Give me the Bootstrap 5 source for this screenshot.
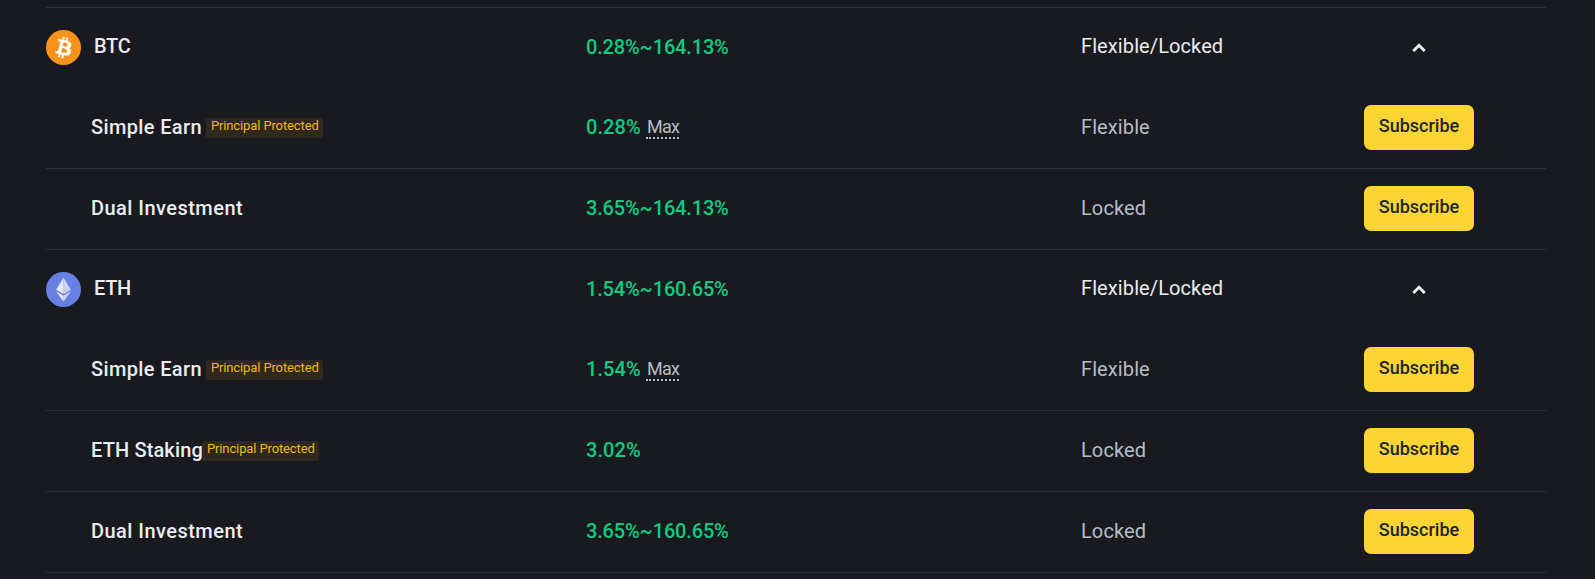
<!DOCTYPE html>
<html lang="en" data-bs-theme="dark">
<head>
<meta charset="utf-8">
<title>Earn products</title>
<link href="https://cdn.jsdelivr.net/npm/bootstrap@5.3.0/dist/css/bootstrap.min.css" rel="stylesheet">
<style>
body { background: #181a20; color: #eaecef; font: 400 20px/30px Roboto, sans-serif; overflow: hidden; }
.earn-list { margin: 7px 49px 0 46px; border-top: 1px solid #2b3139; }
.asset-row { height: 80px; padding-bottom: 4px; }
.product-row { height: 81px; border-bottom: 1px solid #2b3139; padding-bottom: 2px; }
.col-name { width: 36%; }
.col-apr { width: 33%; }
.col-term { width: 211px; letter-spacing: .1px; color: #b7bdc6; }
.asset-row .col-term { color: #eaecef; }
.coin { width: 35px; height: 35px; margin: 3px 13px 0 0; }
.asset-name { font-weight: 500; letter-spacing: -.3px; }
.product-name { font-weight: 500; letter-spacing: .36px; margin-left: 45px; }
.product-name.full { letter-spacing: .46px; }
.product-name.staking { letter-spacing: .14px; margin-right: -1px; }
.apr { color: #0ecb81; font-weight: 500; letter-spacing: -.16px; }
.asset-row .apr { padding-top: 2px; }
.product-row span.apr { letter-spacing: .1px; }
.apr-max { font-size: 18px; line-height: 20px; color: #b7bdc6; border-bottom: 2px dotted #b7bdc6; margin: 2px 0 0 5px; letter-spacing: -.7px; padding-left: 1px; }
.tag { background: #2e281e; color: #f0b90b; font-size: 13px; line-height: 16px; letter-spacing: -.12px; height: 20px; width: 117px; padding-left: 5px; border-radius: 2px; margin-left: 4px; margin-top: 1px; }
.staking + .tag { margin-left: 0; }
.btn-earn { --bs-btn-bg: #fcd535; --bs-btn-color: #202630; --bs-btn-hover-bg: #f0c820; width: 110px; height: 45px; padding: 0 0 4px; border: 0; border-radius: 7px; font-size: 18px; font-weight: 500; letter-spacing: 0; margin-top: 1px; }
.chevron { width: 14px; height: 10px; margin-top: 4px; }
</style>
</head>
<body>
<main class="earn-list">
  <div class="asset-row d-flex align-items-center">
    <div class="col-name d-flex align-items-center">
      <svg class="coin flex-shrink-0" viewBox="0 0 32 32"><circle cx="16" cy="16" r="16" fill="#f7931a"/><path fill="#fff" d="M23.189 14.02c.314-2.096-1.283-3.223-3.465-3.975l.708-2.84-1.728-.43-.69 2.765c-.454-.114-.92-.22-1.385-.326l.695-2.783L15.596 6l-.708 2.839c-.376-.086-.746-.17-1.104-.26l.002-.009-2.384-.595-.46 1.846s1.283.294 1.256.312c.7.175.826.638.805 1.006l-.806 3.235c.048.012.11.03.18.057l-.183-.045-1.13 4.532c-.086.212-.303.531-.793.41.018.025-1.256-.313-1.256-.313l-.858 1.978 2.25.561c.418.105.828.215 1.231.318l-.715 2.872 1.727.43.708-2.84c.472.127.93.245 1.378.357l-.706 2.828 1.728.43.715-2.866c2.948.558 5.164.333 6.097-2.333.752-2.146-.037-3.385-1.588-4.192 1.13-.26 1.98-1.003 2.207-2.538zm-3.95 5.538c-.533 2.147-4.148.986-5.32.695l.95-3.805c1.172.293 4.929.872 4.37 3.11zm.535-5.569c-.487 1.953-3.495.96-4.47.717l.86-3.45c.975.243 4.118.696 3.61 2.733z"/></svg>
      <span class="asset-name">BTC</span>
    </div>
    <div class="col-apr apr">0.28%~164.13%</div>
    <div class="col-term">Flexible/Locked</div>
    <div class="flex-fill d-flex justify-content-center"><svg class="chevron" viewBox="0 0 14 10"><path d="M1.3 8 7 2.3 12.7 8" fill="none" stroke="#eaecef" stroke-width="3"/></svg></div>
  </div>
  <div class="product-row d-flex align-items-center">
    <div class="col-name d-flex align-items-center"><span class="product-name">Simple Earn</span><span class="tag">Principal Protected</span></div>
    <div class="col-apr d-flex align-items-center"><span class="apr">0.28%</span><span class="apr-max">Max</span></div>
    <div class="col-term">Flexible</div>
    <div class="flex-fill d-flex justify-content-center"><button class="btn btn-earn">Subscribe</button></div>
  </div>
  <div class="product-row d-flex align-items-center">
    <div class="col-name"><span class="product-name full">Dual Investment</span></div>
    <div class="col-apr apr">3.65%~164.13%</div>
    <div class="col-term">Locked</div>
    <div class="flex-fill d-flex justify-content-center"><button class="btn btn-earn">Subscribe</button></div>
  </div>

  <div class="asset-row d-flex align-items-center">
    <div class="col-name d-flex align-items-center">
      <svg class="coin flex-shrink-0" viewBox="0 0 32 32"><circle cx="16" cy="16" r="16" fill="#687fe3"/><path fill="#e4e8f8" d="M16 5 9.3 16.2 16 20.2z"/><path fill="#d0d6f0" d="m16 5 6.7 11.2-6.7 4z"/><path fill="#c3cbed" d="m16 13.2 6.7 3-6.7 4z"/><path fill="#e9edfb" d="m9.3 17.8 6.7 4V27z"/><path fill="#d3daf5" d="m22.7 17.8-6.7 4V27z"/></svg>
      <span class="asset-name">ETH</span>
    </div>
    <div class="col-apr apr">1.54%~160.65%</div>
    <div class="col-term">Flexible/Locked</div>
    <div class="flex-fill d-flex justify-content-center"><svg class="chevron" viewBox="0 0 14 10"><path d="M1.3 8 7 2.3 12.7 8" fill="none" stroke="#eaecef" stroke-width="3"/></svg></div>
  </div>
  <div class="product-row d-flex align-items-center">
    <div class="col-name d-flex align-items-center"><span class="product-name">Simple Earn</span><span class="tag">Principal Protected</span></div>
    <div class="col-apr d-flex align-items-center"><span class="apr">1.54%</span><span class="apr-max">Max</span></div>
    <div class="col-term">Flexible</div>
    <div class="flex-fill d-flex justify-content-center"><button class="btn btn-earn">Subscribe</button></div>
  </div>
  <div class="product-row d-flex align-items-center">
    <div class="col-name d-flex align-items-center"><span class="product-name staking">ETH Staking</span><span class="tag">Principal Protected</span></div>
    <div class="col-apr d-flex align-items-center"><span class="apr">3.02%</span></div>
    <div class="col-term">Locked</div>
    <div class="flex-fill d-flex justify-content-center"><button class="btn btn-earn">Subscribe</button></div>
  </div>
  <div class="product-row d-flex align-items-center">
    <div class="col-name"><span class="product-name full">Dual Investment</span></div>
    <div class="col-apr apr">3.65%~160.65%</div>
    <div class="col-term">Locked</div>
    <div class="flex-fill d-flex justify-content-center"><button class="btn btn-earn">Subscribe</button></div>
  </div>
</main>
<script src="https://cdn.jsdelivr.net/npm/bootstrap@5.3.0/dist/js/bootstrap.bundle.min.js"></script>
</body>
</html>
